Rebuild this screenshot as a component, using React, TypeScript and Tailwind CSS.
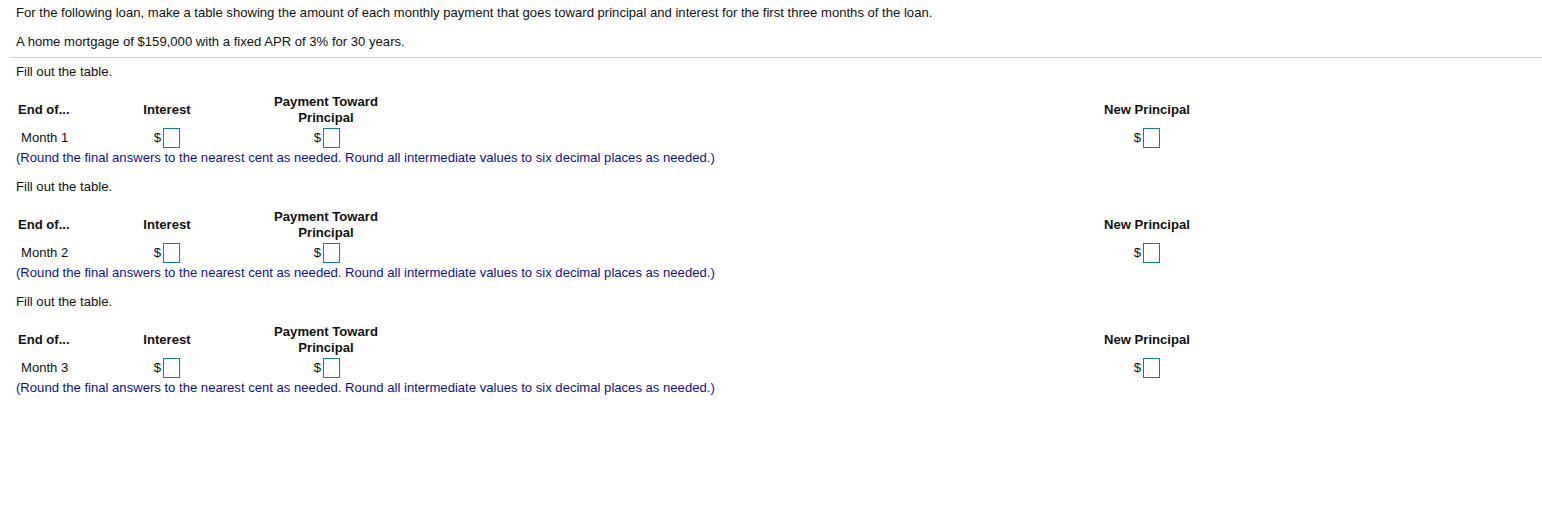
const months = ['Month 1', 'Month 2', 'Month 3'];

function AnswerBox() {
  return (
    <span className="inline-flex items-center">
      <span className="mr-[2px]">$</span>
      <span className="inline-block w-[17px] h-[20px] border border-[#1b7a99] bg-white" />
    </span>
  );
}

function FillTable({ month }: { month: string }) {
  return (
    <div>
      <p className="h-4 leading-4">Fill out the table.</p>

      {/* header + single row, columns centered like the original table */}
      <div className="mt-[14px] grid grid-cols-[104px_94px_224px_652px_114px] font-bold">
        <div className="flex items-center pl-[2px]">End of...</div>
        <div className="flex items-center justify-center">Interest</div>
        <div className="text-center leading-4">
          Payment Toward
          <br />
          Principal
        </div>
        <div />
        <div className="flex items-center justify-center">New Principal</div>
      </div>

      <div className="mt-[2px] grid h-5 grid-cols-[104px_94px_224px_652px_114px] items-center">
        <div className="pl-[5px]">{month}</div>
        <div className="flex justify-center">
          <AnswerBox />
        </div>
        <div className="flex justify-center pl-[2px]">
          <AnswerBox />
        </div>
        <div />
        <div className="flex justify-center">
          <AnswerBox />
        </div>
      </div>

      <p className="mt-[2px] h-4 leading-4 text-[#10108e]">
        (Round the final answers to the nearest cent as needed. Round all intermediate values to six decimal places as needed.)
      </p>
    </div>
  );
}

export default function App() {
  return (
    <div className="min-h-[509px] w-[1542px] bg-white pt-[5px] text-[13.1px] leading-4 text-[#111] font-['Liberation_Sans',Arial,sans-serif]">
      <p className="px-4">
        For the following loan, make a table showing the amount of each monthly payment that goes toward principal and
        interest for the first three months of the loan.
      </p>
      <p className="mt-[13px] px-4">A home mortgage of $159,000 with a fixed APR of 3% for 30 years.</p>
      <div className="ml-[10px] mt-[7px] h-px bg-[#c9ceda]" />

      <div className="mt-[6px] flex flex-col gap-[13px] px-4">
        {months.map((m) => (
          <FillTable key={m} month={m} />
        ))}
      </div>
    </div>
  );
}
